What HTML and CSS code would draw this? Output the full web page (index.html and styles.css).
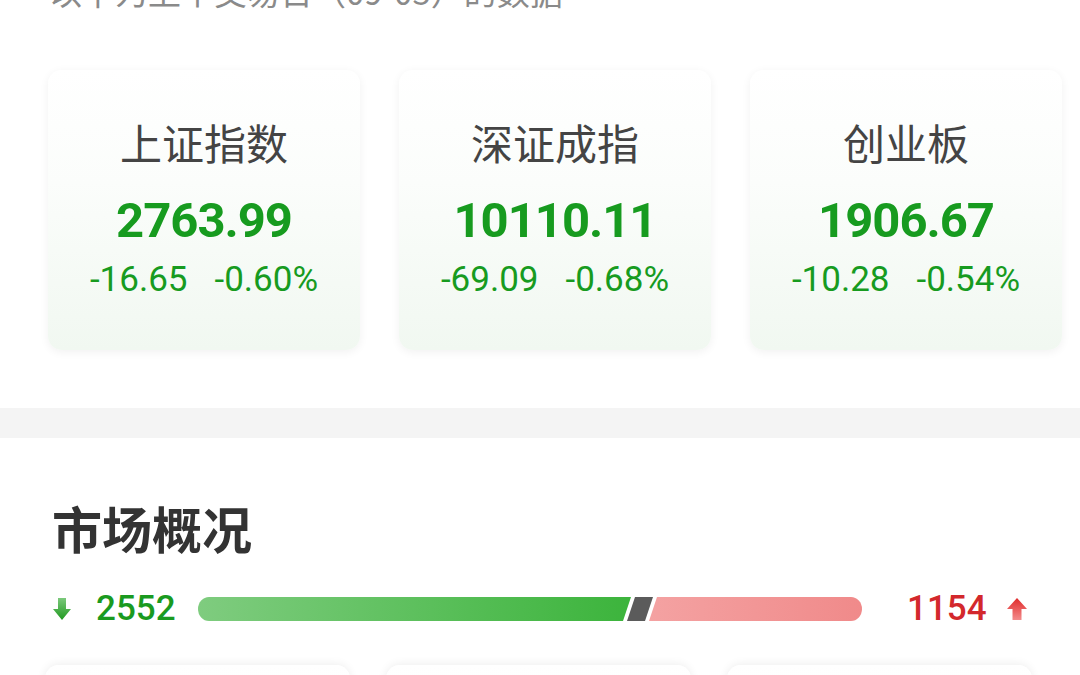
FILE: index.html
```html
<!DOCTYPE html>
<html lang="zh-CN">
<head>
<meta charset="utf-8">
<title>行情</title>
<link rel="stylesheet" href="styles.css">
</head>
<body>
<div class="page">
  <p class="notice">以下为上个交易日（09-05）的数据</p>

  <section class="indices">
    <div class="card">
      <div class="card-title">上证指数</div>
      <div class="card-value">2763.99</div>
      <div class="card-change"><span>-16.65</span><span>-0.60%</span></div>
    </div>
    <div class="card">
      <div class="card-title">深证成指</div>
      <div class="card-value">10110.11</div>
      <div class="card-change"><span>-69.09</span><span>-0.68%</span></div>
    </div>
    <div class="card">
      <div class="card-title">创业板</div>
      <div class="card-value">1906.67</div>
      <div class="card-change"><span>-10.28</span><span>-0.54%</span></div>
    </div>
  </section>

  <div class="band"></div>

  <section class="overview">
    <h2 class="overview-title">市场概况</h2>
    <div class="updown">
      <svg class="arrow" width="18" height="23" viewBox="0 0 18 23">
        <defs>
          <linearGradient id="gdown" x1="0" y1="0" x2="0" y2="1">
            <stop offset="0" stop-color="#7cc97c"/>
            <stop offset="1" stop-color="#1f991f"/>
          </linearGradient>
        </defs>
        <path d="M5 0 H13 V11 H18 L9 22 L0 11 H5 Z" fill="url(#gdown)"/>
      </svg>
      <span class="count down">2552</span>
      <svg class="bar" width="664" height="24" viewBox="0 0 664 24">
        <defs>
          <linearGradient id="ggreen" x1="0" y1="0" x2="1" y2="0">
            <stop offset="0" stop-color="#7fcc7f"/>
            <stop offset="1" stop-color="#3cb43c"/>
          </linearGradient>
          <linearGradient id="gpink" x1="0" y1="0" x2="1" y2="0">
            <stop offset="0" stop-color="#f4a2a2"/>
            <stop offset="1" stop-color="#f08a8a"/>
          </linearGradient>
        </defs>
        <path d="M11 0 H433 L425 24 H11 A11 12 0 0 1 11 0 Z" fill="url(#ggreen)"/>
        <path d="M437 0 H455 L447 24 H429 Z" fill="#5b5b5b"/>
        <path d="M459 0 H653 A11 12 0 0 1 653 24 H451 Z" fill="url(#gpink)"/>
      </svg>
      <span class="count up">1154</span>
      <svg class="arrow up-arrow" width="20" height="22" viewBox="0 0 20 22">
        <defs>
          <linearGradient id="gup" x1="0" y1="0" x2="0" y2="1">
            <stop offset="0" stop-color="#e02a2a"/>
            <stop offset="1" stop-color="#f38c8c"/>
          </linearGradient>
        </defs>
        <path d="M10 0 L20 11 H14.5 V22 H5.5 V11 H0 Z" fill="url(#gup)"/>
      </svg>
    </div>

    <div class="stats">
      <div class="stat-card"></div>
      <div class="stat-card"></div>
      <div class="stat-card"></div>
    </div>
  </section>
</div>
</body>
</html>
```

FILE: styles.css
```css
html, body {
  margin: 0;
  padding: 0;
  background: #ffffff;
}

body {
  font-family: "Noto Sans CJK SC", "Noto Sans", sans-serif;
  color: #333333;
  overflow: hidden;
}

.page {
  width: 1080px;
  height: 675px;
  overflow: hidden;
}

.notice {
  margin: -29px 0 0 0;
  padding-left: 49px;
  font-size: 33px;
  line-height: 40px;
  color: #8a8a8a;
  white-space: nowrap;
}

.indices {
  display: flex;
  gap: 39px;
  padding-left: 48px;
  margin-top: 59px;
}

.card {
  width: 312px;
  height: 280px;
  box-sizing: border-box;
  padding-top: 47px;
  border-radius: 14px;
  background: linear-gradient(to bottom, #ffffff 0%, #fbfdfb 40%, #f1f8f1 100%);
  box-shadow: 0 2px 10px rgba(0, 0, 0, 0.06);
  display: flex;
  flex-direction: column;
  align-items: center;
}

.card-title {
  font-size: 42px;
  line-height: 50px;
  color: #444444;
  font-weight: 400;
}

.card-value {
  margin-top: 26px;
  font-family: Roboto, "Liberation Sans", sans-serif;
  font-size: 49px;
  line-height: 56px;
  font-weight: 700;
  letter-spacing: -1px;
  color: #179b1f;
}

.card-change {
  margin-top: 11px;
  display: flex;
  gap: 27px;
  font-family: Roboto, "Liberation Sans", sans-serif;
  font-size: 35px;
  line-height: 40px;
  font-weight: 400;
  color: #179b1f;
}

.band {
  height: 30px;
  margin-top: 58px;
  background: #f4f4f4;
}

.overview {
  padding-top: 59px;
}

.overview-title {
  margin: 0;
  padding-left: 52px;
  font-size: 50px;
  line-height: 60px;
  font-weight: 700;
  color: #333333;
}

.updown {
  display: flex;
  align-items: center;
  height: 40px;
  margin-top: 32px;
  padding-left: 53px;
}

.arrow {
  display: block;
  flex: none;
}

.count {
  font-family: Roboto, "Liberation Sans", sans-serif;
  font-size: 35px;
  line-height: 40px;
  font-weight: 500;
  width: 79px;
}

.count.down {
  color: #1a9a1f;
  margin-left: 25px;
}

.count.up {
  color: #d3282c;
  margin-left: 45px;
}

.bar {
  display: block;
  flex: none;
  margin-left: 23px;
}

.up-arrow {
  margin-left: 21px;
}

.stats {
  display: flex;
  gap: 36px;
  padding-left: 45px;
  margin-top: 36px;
}

.stat-card {
  width: 305px;
  height: 160px;
  border-radius: 14px;
  background: linear-gradient(to bottom, #ffffff, #fafafa);
  box-shadow: 0 -1px 10px rgba(0, 0, 0, 0.07);
}
```
